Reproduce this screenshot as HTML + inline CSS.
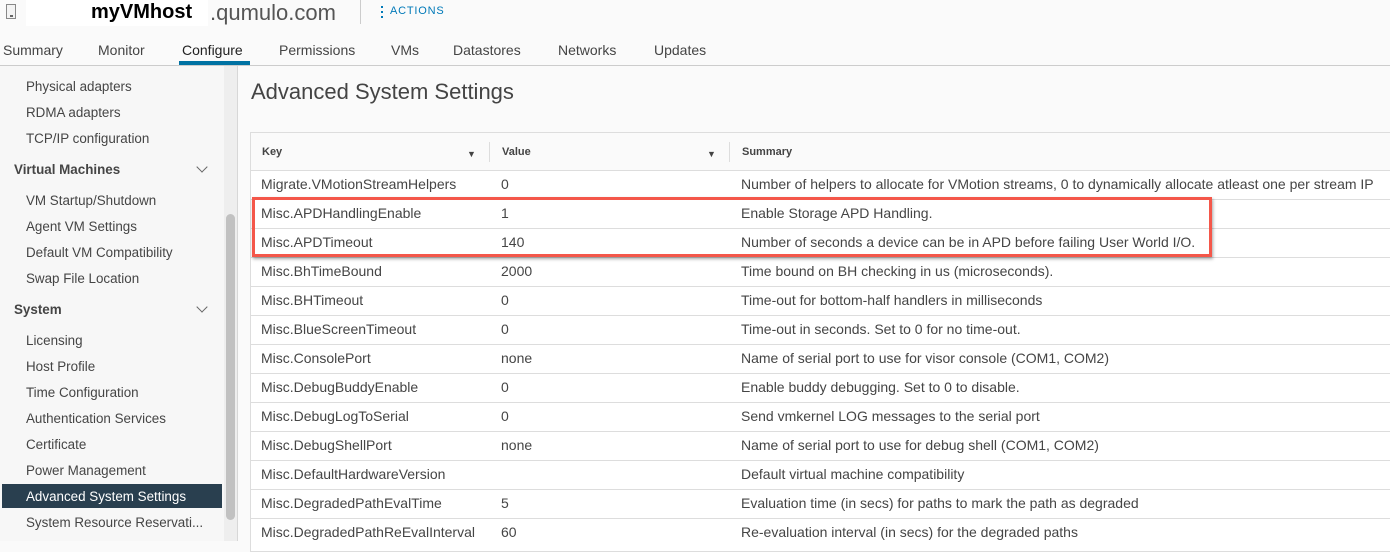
<!DOCTYPE html><html><head><style>
*{margin:0;padding:0;box-sizing:border-box}
body{width:1390px;height:541px;overflow:hidden;background:#fafafa;font-family:"Liberation Sans",sans-serif;color:#333;position:relative}
.a{position:absolute;white-space:nowrap}
.side{position:absolute;left:0;top:66px;width:238px;height:475px;background:#f7f7f7;border-right:1px solid #d7d7d7}
.si{position:absolute;left:26px;font-size:13.4px;color:#454545}
.sh{position:absolute;left:14px;font-size:13.4px;font-weight:bold;color:#454545}
.chev{position:absolute;left:198px;width:8px;height:8px;border-right:1.5px solid #666;border-bottom:1.5px solid #666;transform:rotate(45deg)}
.tbl{position:absolute;left:250px;top:132px;width:1150px;height:420px;background:#fff;border:1px solid #ddd}
.row{position:absolute;left:0;width:1150px;height:29px;border-top:1px solid #ddd;font-size:14px;color:#454545}
.row span{position:absolute;top:5px}
</style></head><body>
<div class="a" style="left:0;top:0;width:1390px;height:36px;background:#fafafa"></div>
<div class="a" style="left:6px;top:4px;width:10px;height:15px;border:1px solid #888;background:#f3f3f3"></div>
<div class="a" style="left:10px;top:15px;width:3px;height:2px;background:#666"></div>
<div class="a" style="left:26px;top:0;width:182px;height:26px;background:#fff"></div>
<div class="a" style="left:91px;top:1px;font-size:20px;font-weight:bold;color:#000">myVMhost</div>
<div class="a" style="left:210px;top:0;font-size:22px;color:#555">.qumulo.com</div>
<div class="a" style="left:360px;top:0;width:1px;height:24px;background:#ccc"></div>
<div class="a" style="left:381px;top:6px;width:2px;height:2px;background:#0079b8;box-shadow:0 5px 0 #0079b8,0 10px 0 #0079b8"></div>
<div class="a" style="left:390px;top:5px;font-size:11px;color:#0079b8;letter-spacing:0.8px">ACTIONS</div>
<div class="a" style="left:3px;top:42px;font-size:14px;color:#444">Summary</div>
<div class="a" style="left:98px;top:42px;font-size:14px;color:#444">Monitor</div>
<div class="a" style="left:182px;top:42px;font-size:14px;color:#222">Configure</div>
<div class="a" style="left:179px;top:61px;width:71px;height:4px;background:#0072a3"></div>
<div class="a" style="left:279px;top:42px;font-size:14px;color:#444">Permissions</div>
<div class="a" style="left:391px;top:42px;font-size:14px;color:#444">VMs</div>
<div class="a" style="left:453px;top:42px;font-size:14px;color:#444">Datastores</div>
<div class="a" style="left:558px;top:42px;font-size:14px;color:#444">Networks</div>
<div class="a" style="left:654px;top:42px;font-size:14px;color:#444">Updates</div>
<div class="a" style="left:0;top:65px;width:1390px;height:1px;background:#ccc"></div>
<div class="side">
<div class="si" style="top:13px">Physical adapters</div>
<div class="si" style="top:39px">RDMA adapters</div>
<div class="si" style="top:65px">TCP/IP configuration</div>
<div class="sh" style="top:96px">Virtual Machines</div><div class="chev" style="top:97px"></div>
<div class="si" style="top:127px">VM Startup/Shutdown</div>
<div class="si" style="top:153px">Agent VM Settings</div>
<div class="si" style="top:179px">Default VM Compatibility</div>
<div class="si" style="top:205px">Swap File Location</div>
<div class="sh" style="top:236px">System</div><div class="chev" style="top:237px"></div>
<div class="si" style="top:267px">Licensing</div>
<div class="si" style="top:293px">Host Profile</div>
<div class="si" style="top:319px">Time Configuration</div>
<div class="si" style="top:345px">Authentication Services</div>
<div class="si" style="top:371px">Certificate</div>
<div class="si" style="top:397px">Power Management</div>
<div class="a" style="left:2px;top:418px;width:220px;height:24px;background:#293f4f"></div>
<div class="si" style="top:423px;color:#fff">Advanced System Settings</div>
<div class="si" style="top:449px">System Resource Reservati...</div>
<div class="a" style="left:224px;top:0;width:13px;height:475px;background:#eee"></div>
<div class="a" style="left:226px;top:148px;width:9px;height:306px;background:#c1c1c1;border-radius:5px"></div>
</div>
<div class="a" style="left:251px;top:79px;font-size:22px;color:#444">Advanced System Settings</div>
<div class="tbl">
<div class="a" style="left:0;top:0;width:1150px;height:37px;background:#fafafa"></div>
<div class="a" style="left:11px;top:13px;font-size:11px;font-weight:bold;color:#444">Key</div>
<div class="a" style="left:216px;top:16px;font-size:9px;color:#444">▼</div>
<div class="a" style="left:238px;top:9px;width:1px;height:20px;background:#ddd"></div>
<div class="a" style="left:251px;top:13px;font-size:11px;font-weight:bold;color:#444">Value</div>
<div class="a" style="left:456px;top:16px;font-size:9px;color:#444">▼</div>
<div class="a" style="left:478px;top:9px;width:1px;height:20px;background:#ddd"></div>
<div class="a" style="left:491px;top:13px;font-size:11px;font-weight:bold;color:#444">Summary</div>
<div class="row" style="top:37px"><span style="left:10px">Migrate.VMotionStreamHelpers</span><span style="left:250px">0</span><span style="left:490px">Number of helpers to allocate for VMotion streams, 0 to dynamically allocate atleast one per stream IP</span></div>
<div class="row" style="top:66px"><span style="left:10px">Misc.APDHandlingEnable</span><span style="left:250px">1</span><span style="left:490px">Enable Storage APD Handling.</span></div>
<div class="row" style="top:95px"><span style="left:10px">Misc.APDTimeout</span><span style="left:250px">140</span><span style="left:490px">Number of seconds a device can be in APD before failing User World I/O.</span></div>
<div class="row" style="top:124px"><span style="left:10px">Misc.BhTimeBound</span><span style="left:250px">2000</span><span style="left:490px">Time bound on BH checking in us (microseconds).</span></div>
<div class="row" style="top:153px"><span style="left:10px">Misc.BHTimeout</span><span style="left:250px">0</span><span style="left:490px">Time-out for bottom-half handlers in milliseconds</span></div>
<div class="row" style="top:182px"><span style="left:10px">Misc.BlueScreenTimeout</span><span style="left:250px">0</span><span style="left:490px">Time-out in seconds. Set to 0 for no time-out.</span></div>
<div class="row" style="top:211px"><span style="left:10px">Misc.ConsolePort</span><span style="left:250px">none</span><span style="left:490px">Name of serial port to use for visor console (COM1, COM2)</span></div>
<div class="row" style="top:240px"><span style="left:10px">Misc.DebugBuddyEnable</span><span style="left:250px">0</span><span style="left:490px">Enable buddy debugging. Set to 0 to disable.</span></div>
<div class="row" style="top:269px"><span style="left:10px">Misc.DebugLogToSerial</span><span style="left:250px">0</span><span style="left:490px">Send vmkernel LOG messages to the serial port</span></div>
<div class="row" style="top:298px"><span style="left:10px">Misc.DebugShellPort</span><span style="left:250px">none</span><span style="left:490px">Name of serial port to use for debug shell (COM1, COM2)</span></div>
<div class="row" style="top:327px"><span style="left:10px">Misc.DefaultHardwareVersion</span><span style="left:250px"></span><span style="left:490px">Default virtual machine compatibility</span></div>
<div class="row" style="top:356px"><span style="left:10px">Misc.DegradedPathEvalTime</span><span style="left:250px">5</span><span style="left:490px">Evaluation time (in secs) for paths to mark the path as degraded</span></div>
<div class="row" style="top:385px"><span style="left:10px">Misc.DegradedPathReEvalInterval</span><span style="left:250px">60</span><span style="left:490px">Re-evaluation interval (in secs) for the degraded paths</span></div>
</div>
<div class="a" style="left:252px;top:197px;width:960px;height:60px;border:3px solid #f4574a;box-shadow:1px 2px 3px rgba(0,0,0,0.35)"></div>
</body></html>
